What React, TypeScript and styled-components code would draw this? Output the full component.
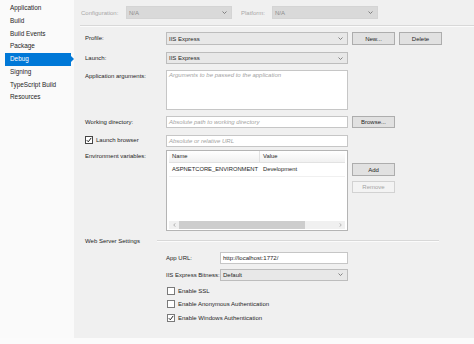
import React from 'react';
import styled, { createGlobalStyle } from 'styled-components';

const GlobalStyle = createGlobalStyle`
	html, body {
		margin: 0;
		padding: 0;
		background: #fbfbfb;
	}
	body {
		font-family: "Liberation Sans", Arial, sans-serif;
		color: #1e1e1e;
	}
`;

const Frame = styled.div`
	width: 474px;
	height: 344px;
	display: flex;
	flex-direction: column;
	overflow: hidden;
`;

const Body = styled.div`
	display: flex;
	height: 338px;
`;

const Sidebar = styled.nav`
	width: 74px;
	flex-shrink: 0;
	background: #fafafa;
	padding-top: 2.4px;
	box-sizing: border-box;
`;

const NavItem = styled.div<{ $active?: boolean }>`
	position: relative;
	height: 12.7px;
	line-height: 12.7px;
	font-size: 6.4px;
	box-sizing: border-box;
	padding-left: ${(p) => (p.$active ? '5px' : '10px')};
	margin-left: ${(p) => (p.$active ? '5px' : '0')};
	width: ${(p) => (p.$active ? '66px' : 'auto')};
	background: ${(p) => (p.$active ? '#0078d7' : 'transparent')};
	color: ${(p) => (p.$active ? '#fff' : '#1e1e1e')};
	${(p) =>
		p.$active &&
		`&::after {
			content: '';
			position: absolute;
			right: -3px;
			top: 50%;
			margin-top: -3px;
			border-left: 3px solid #0078d7;
			border-top: 3px solid transparent;
			border-bottom: 3px solid transparent;
		}`}
`;

const Main = styled.main`
	flex: 1;
	background: #f0f0f0;
	display: flex;
	flex-direction: column;
`;

const TopBar = styled.div`
	display: flex;
	align-items: center;
	height: 13px;
	margin-top: 6px;
	padding-left: 7px;
`;

const DimLabel = styled.span<{ $w: number }>`
	width: ${(p) => p.$w}px;
	font-size: 6px;
	color: #a8a8a8;
	white-space: nowrap;
`;

const Etched = styled.div`
	height: 0;
	border-top: 1px solid #d8d8d8;
	border-bottom: 1px solid #fbfbfb;
`;

const TopDivider = styled(Etched)`
	margin: 6px 0 0 6px;
`;

const SelectBox = styled.div<{ $w?: number; $h?: number; $disabled?: boolean }>`
	width: ${(p) => (p.$w ? `${p.$w}px` : 'auto')};
	height: ${(p) => p.$h ?? 12}px;
	box-sizing: border-box;
	display: flex;
	align-items: center;
	justify-content: space-between;
	padding: 0 4px 0 2px;
	font-size: 6px;
	border: 1px solid ${(p) => (p.$disabled ? '#d4d4d4' : '#bdbdbd')};
	background: ${(p) => (p.$disabled ? '#d9d9d9' : '#e8e8e8')};
	color: ${(p) => (p.$disabled ? '#8c8c8c' : '#1e1e1e')};
`;

const Form = styled.div`
	padding-left: 11px;
	margin-top: 5px;
	display: flex;
	flex-direction: column;
`;

const Row = styled.div<{ $mt?: number }>`
	display: grid;
	grid-template-columns: 77px 182px 43px 43px;
	column-gap: 4px;
	align-items: start;
	margin-top: ${(p) => p.$mt ?? 0}px;
`;

const Label = styled.div`
	font-size: 6px;
	line-height: 7px;
	padding-top: 3px;
	white-space: nowrap;
`;

const TextInput = styled.div<{ $h?: number }>`
	height: ${(p) => p.$h ?? 12}px;
	box-sizing: border-box;
	border: 1px solid #c6c6c6;
	background: #fff;
	font-size: 6px;
	line-height: ${(p) => ((p.$h ?? 12) > 14 ? '8px' : '10px')};
	padding-left: 2px;
	color: #1e1e1e;
	white-space: nowrap;
	overflow: hidden;
`;

const Placeholder = styled.span`
	font-style: italic;
	color: #a3a3a3;
`;

const Button = styled.div<{ $disabled?: boolean; $h?: number }>`
	height: ${(p) => p.$h ?? 13}px;
	box-sizing: border-box;
	display: flex;
	align-items: center;
	justify-content: center;
	font-size: 6px;
	border: 1px solid ${(p) => (p.$disabled ? '#d2d2d2' : '#adadad')};
	background: ${(p) => (p.$disabled ? '#f3f3f3' : '#e1e1e1')};
	color: ${(p) => (p.$disabled ? '#a3a3a3' : '#1e1e1e')};
`;

const ButtonStack = styled.div`
	display: flex;
	flex-direction: column;
	gap: 5px;
	padding-top: 13px;
`;

const CheckRow = styled.label<{ $pad?: number }>`
	display: flex;
	align-items: center;
	gap: 3px;
	font-size: 6px;
	height: 8px;
	padding-top: ${(p) => p.$pad ?? 0}px;
	white-space: nowrap;
`;

const Box = styled.span<{ $dark?: boolean }>`
	width: 8px;
	height: 8px;
	box-sizing: border-box;
	border: 1px solid ${(p) => (p.$dark ? '#444' : '#7a7a7a')};
	background: #fff;
	display: flex;
	align-items: center;
	justify-content: center;
	flex-shrink: 0;
`;

const Table = styled.div`
	height: 81px;
	box-sizing: border-box;
	border: 1px solid #b4b4b4;
	background: #fff;
	padding: 0 2px;
	display: flex;
	flex-direction: column;
`;

const TableRow = styled.div<{ $head?: boolean }>`
	display: grid;
	grid-template-columns: 91px 1fr;
	height: ${(p) => (p.$head ? 11 : 13)}px;
	line-height: ${(p) => (p.$head ? 11 : 13)}px;
	font-size: 5.8px;
	background: ${(p) => (p.$head ? 'linear-gradient(#ffffff, #f1f1f1)' : '#fff')};
	border-bottom: 1px solid ${(p) => (p.$head ? '#e2e2e2' : '#f0f0f0')};
`;

const Cell = styled.div<{ $sep?: boolean }>`
	padding-left: 3px;
	white-space: nowrap;
	overflow: hidden;
	border-right: ${(p) => (p.$sep ? '1px solid #e2e2e2' : 'none')};
`;

const ScrollBar = styled.div`
	margin-top: auto;
	margin-bottom: 1px;
	height: 8px;
	display: flex;
	align-items: center;
	background: #f0f0f0;
`;

const Arrow = styled.div`
	width: 10px;
	height: 8px;
	display: flex;
	align-items: center;
	justify-content: center;
`;

const Track = styled.div`
	flex: 1;
	height: 8px;
	display: flex;
`;

const Thumb = styled.div`
	width: 126px;
	height: 8px;
	background: #cdcdcd;
`;

const SectionHead = styled.div`
	width: 354px;
	display: flex;
	align-items: center;
	height: 7px;
	margin-top: 6.5px;
	font-size: 6px;
`;

const SectionTitle = styled.span`
	width: 72px;
	white-space: nowrap;
`;

const SectionLine = styled(Etched)`
	flex: 1;
`;

const SubForm = styled.div`
	margin-left: 81px;
	display: flex;
	flex-direction: column;
`;

const SubRow = styled.div<{ $mt?: number }>`
	display: grid;
	grid-template-columns: 54px 128px;
	align-items: center;
	margin-top: ${(p) => p.$mt ?? 0}px;
	font-size: 6px;
`;

const Checks = styled.div`
	display: flex;
	flex-direction: column;
	gap: 5.5px;
	margin-top: 6px;
	padding-left: 1px;
`;

const BottomStrip = styled.div`
	height: 6px;
	background: #fbfbfb;
`;

const Chevron = () => (
	<svg width="5" height="3" viewBox="0 0 5 3">
		<path d="M0.5 0.5 L2.5 2.5 L4.5 0.5" fill="none" stroke="#6a6a6a" strokeWidth="0.8" />
	</svg>
);

const Tick = () => (
	<svg width="6" height="6" viewBox="0 0 6 6">
		<path d="M0.8 3.2 L2.3 4.8 L5.2 0.9" fill="none" stroke="#222" strokeWidth="1" />
	</svg>
);

const ScrollArrow = ({ dir }: { dir: 'left' | 'right' }) => (
	<svg width="3" height="4" viewBox="0 0 3 4">
		<path
			d={dir === 'left' ? 'M2.5 0.3 L0.7 2 L2.5 3.7' : 'M0.5 0.3 L2.3 2 L0.5 3.7'}
			fill="none"
			stroke="#9a9a9a"
			strokeWidth="0.7"
		/>
	</svg>
);

const Select = ({ value, w, h, disabled }: { value: string; w?: number; h?: number; disabled?: boolean }) => (
	<SelectBox $w={w} $h={h} $disabled={disabled}>
		<span>{value}</span>
		<Chevron />
	</SelectBox>
);

const Check = ({ label, checked, pad, dark }: { label: string; checked?: boolean; pad?: number; dark?: boolean }) => (
	<CheckRow $pad={pad}>
		<Box $dark={dark}>{checked && <Tick />}</Box>
		<span>{label}</span>
	</CheckRow>
);

const navItems = ['Application', 'Build', 'Build Events', 'Package', 'Debug', 'Signing', 'TypeScript Build', 'Resources'];

export default function App() {
	return (
		<>
			<GlobalStyle />
			<Frame>
				<Body>
					<Sidebar>
						{navItems.map((item) => (
							<NavItem key={item} $active={item === 'Debug'}>
								{item}
							</NavItem>
						))}
					</Sidebar>

					<Main>
						{/* configuration / platform */}
						<TopBar>
							<DimLabel $w={45}>Configuration:</DimLabel>
							<Select value="N/A" w={106} h={13} disabled />
							<span style={{ width: 9 }} />
							<DimLabel $w={31}>Platform:</DimLabel>
							<Select value="N/A" w={106} h={13} disabled />
						</TopBar>
						<TopDivider />

						<Form>
							<Row>
								<Label>Profile:</Label>
								<Select value="IIS Express" h={13} />
								<Button>New...</Button>
								<Button>Delete</Button>
							</Row>
							<Row $mt={7}>
								<Label>Launch:</Label>
								<Select value="IIS Express" />
							</Row>
							<Row $mt={6}>
								<Label>Application arguments:</Label>
								<TextInput $h={40}>
									<Placeholder>Arguments to be passed to the application</Placeholder>
								</TextInput>
							</Row>
							<Row $mt={6}>
								<Label>Working directory:</Label>
								<TextInput>
									<Placeholder>Absolute path to working directory</Placeholder>
								</TextInput>
								<Button $h={12}>Browse...</Button>
							</Row>
							<Row $mt={7}>
								<Check label="Launch browser" checked pad={1} dark />
								<TextInput>
									<Placeholder>Absolute or relative URL</Placeholder>
								</TextInput>
							</Row>
							<Row $mt={3}>
								<Label>Environment variables:</Label>
								<Table>
									<TableRow $head>
										<Cell $sep>Name</Cell>
										<Cell>Value</Cell>
									</TableRow>
									<TableRow>
										<Cell>ASPNETCORE_ENVIRONMENT</Cell>
										<Cell>Development</Cell>
									</TableRow>
									<ScrollBar>
										<Arrow>
											<ScrollArrow dir="left" />
										</Arrow>
										<Track>
											<Thumb />
										</Track>
										<Arrow>
											<ScrollArrow dir="right" />
										</Arrow>
									</ScrollBar>
								</Table>
								<ButtonStack>
									<Button>Add</Button>
									<Button $h={12} $disabled>
										Remove
									</Button>
								</ButtonStack>
							</Row>

							<SectionHead>
								<SectionTitle>Web Server Settings</SectionTitle>
								<SectionLine />
							</SectionHead>

							<SubForm>
								<SubRow $mt={7.5}>
									<span>App URL:</span>
									<TextInput>http://localhost:1772/</TextInput>
								</SubRow>
								<SubRow $mt={4.5}>
									<span>IIS Express Bitness:</span>
									<Select value="Default" />
								</SubRow>
								<Checks>
									<Check label="Enable SSL" />
									<Check label="Enable Anonymous Authentication" />
									<Check label="Enable Windows Authentication" checked />
								</Checks>
							</SubForm>
						</Form>
					</Main>
				</Body>
				<BottomStrip />
			</Frame>
		</>
	);
}
